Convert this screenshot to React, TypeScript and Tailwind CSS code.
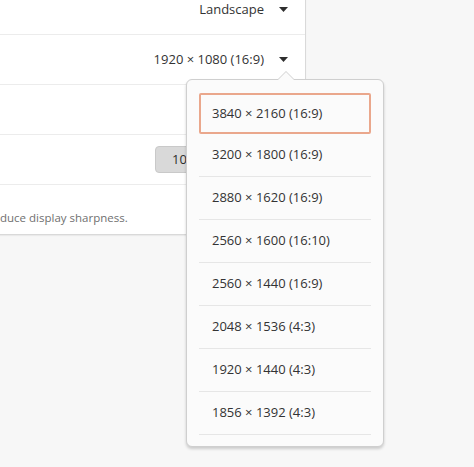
import React from "react";

const modes = [
  "3840 × 2160 (16:9)",
  "3200 × 1800 (16:9)",
  "2880 × 1620 (16:9)",
  "2560 × 1600 (16:10)",
  "2560 × 1440 (16:9)",
  "2048 × 1536 (4:3)",
  "1920 × 1440 (4:3)",
  "1856 × 1392 (4:3)",
];

function Caret() {
  return (
    <svg width="9" height="5" viewBox="0 0 9 5" className="ml-[15px] shrink-0">
      <path d="M0 0 H9 L4.5 5 Z" fill="#2e2e2e" />
    </svg>
  );
}

export default function App() {
  return (
    <div
      className="relative w-[474px] h-[467px] overflow-hidden bg-[#f7f7f7] text-[13px] text-[#333333]"
      style={{ fontFamily: '"Open Sans", "Noto Sans", sans-serif' }}
    >
      {/* settings panel */}
      <div className="w-[306px] -mt-[15px] bg-white border-r border-b border-[#d9d9d9] shadow-[0_1px_1px_rgba(0,0,0,0.05)]">
        <div className="h-[50px] flex items-center justify-end pr-[17px] border-b border-[#ececec]">
          <span>Landscape</span>
          <Caret />
        </div>
        <div className="h-[50px] flex items-center justify-end pr-[17px] border-b border-[#ececec]">
          <span>1920 × 1080 (16:9)</span>
          <Caret />
        </div>
        <div className="h-[50px] border-b border-[#ececec]" />
        <div className="h-[50px] flex items-center pl-[155px] border-b border-[#ececec]">
          <div className="h-[27px] w-[70px] flex items-center pl-[16px] rounded-[4px] bg-[#d9d9d9] border border-[#c9c9c9] text-[#2e2e2e]">
            100 %
          </div>
        </div>
        <div className="h-[49px] flex items-center text-[11.5px] text-[#6f6f6f] pt-[17px]">
          duce display sharpness.
        </div>
      </div>

      {/* resolution popover */}
      <div className="absolute left-[186px] top-[79px] w-[198px] h-[368px] rounded-[6px] bg-[#fbfbfb] border border-[#cfcfcf] shadow-[0_2px_3px_rgba(0,0,0,0.18)] px-[12px] pt-[13px]">
        <div className="absolute -top-[9px] left-[90px] w-0 h-0 border-l-[9px] border-r-[9px] border-b-[9px] border-l-transparent border-r-transparent border-b-[#cfcfcf]" />
        <div className="absolute -top-[8px] left-[91px] w-0 h-0 border-l-[8px] border-r-[8px] border-b-[8px] border-l-transparent border-r-transparent border-b-[#fbfbfb]" />
        <div className="flex flex-col">
          {modes.map((m, i) =>
            i === 0 ? (
              <div
                key={m}
                className="h-[41px] flex items-center pl-[11px] border-2 border-[#eaa78c] rounded-[2px]"
              >
                {m}
              </div>
            ) : (
              <div
                key={m}
                className="h-[43px] flex items-center pl-[13px] border-b border-[#e6e6e6]"
              >
                {m}
              </div>
            )
          )}
        </div>
      </div>
    </div>
  );
}
